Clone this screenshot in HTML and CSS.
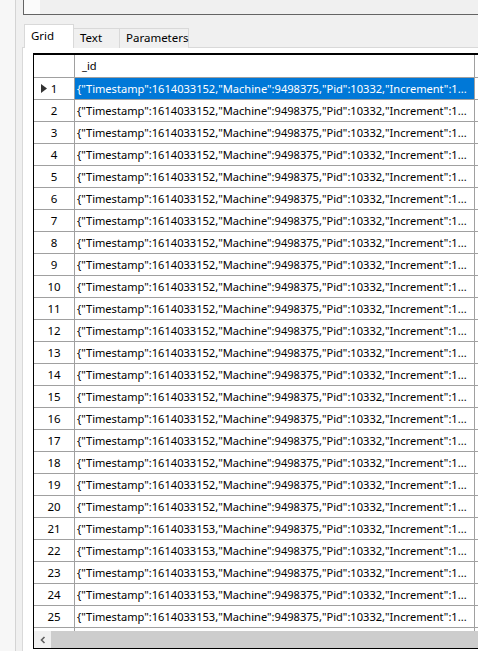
FILE: index.html
```html
<!DOCTYPE html>
<html lang="en">
<head>
  <meta charset="UTF-8">
  <title>Query Result</title>
  <link rel="stylesheet" href="styles.css">
</head>
<body>
  <div class="window">
    <div class="side"></div>
    <div class="main">
      <!-- editor area above the tabs -->
      <div class="top-box"><div class="top-white"></div></div>

      <!-- result tabs -->
      <div class="tabs">
        <div class="tab active">Grid</div>
        <div class="tab">Text</div>
        <div class="tab">Parameters</div>
      </div>

      <div class="tab-page">
        <div class="grid">
          <div class="grid-body">
            <div class="row head"><div class="num"></div><div class="cell">_id</div><div class="rest"></div></div>
            <div class="row selected"><div class="num"><svg class="arrow" width="6" height="9" viewBox="0 0 6 9"><path d="M0 0 L6 4.5 L0 9 Z" fill="#333"/></svg>1</div><div class="cell">{"Timestamp":1614033152,"Machine":9498375,"Pid":10332,"Increment":1...</div><div class="rest"></div></div>
            <div class="row"><div class="num">2</div><div class="cell">{"Timestamp":1614033152,"Machine":9498375,"Pid":10332,"Increment":1...</div><div class="rest"></div></div>
            <div class="row"><div class="num">3</div><div class="cell">{"Timestamp":1614033152,"Machine":9498375,"Pid":10332,"Increment":1...</div><div class="rest"></div></div>
            <div class="row"><div class="num">4</div><div class="cell">{"Timestamp":1614033152,"Machine":9498375,"Pid":10332,"Increment":1...</div><div class="rest"></div></div>
            <div class="row"><div class="num">5</div><div class="cell">{"Timestamp":1614033152,"Machine":9498375,"Pid":10332,"Increment":1...</div><div class="rest"></div></div>
            <div class="row"><div class="num">6</div><div class="cell">{"Timestamp":1614033152,"Machine":9498375,"Pid":10332,"Increment":1...</div><div class="rest"></div></div>
            <div class="row"><div class="num">7</div><div class="cell">{"Timestamp":1614033152,"Machine":9498375,"Pid":10332,"Increment":1...</div><div class="rest"></div></div>
            <div class="row"><div class="num">8</div><div class="cell">{"Timestamp":1614033152,"Machine":9498375,"Pid":10332,"Increment":1...</div><div class="rest"></div></div>
            <div class="row"><div class="num">9</div><div class="cell">{"Timestamp":1614033152,"Machine":9498375,"Pid":10332,"Increment":1...</div><div class="rest"></div></div>
            <div class="row"><div class="num">10</div><div class="cell">{"Timestamp":1614033152,"Machine":9498375,"Pid":10332,"Increment":1...</div><div class="rest"></div></div>
            <div class="row"><div class="num">11</div><div class="cell">{"Timestamp":1614033152,"Machine":9498375,"Pid":10332,"Increment":1...</div><div class="rest"></div></div>
            <div class="row"><div class="num">12</div><div class="cell">{"Timestamp":1614033152,"Machine":9498375,"Pid":10332,"Increment":1...</div><div class="rest"></div></div>
            <div class="row"><div class="num">13</div><div class="cell">{"Timestamp":1614033152,"Machine":9498375,"Pid":10332,"Increment":1...</div><div class="rest"></div></div>
            <div class="row"><div class="num">14</div><div class="cell">{"Timestamp":1614033152,"Machine":9498375,"Pid":10332,"Increment":1...</div><div class="rest"></div></div>
            <div class="row"><div class="num">15</div><div class="cell">{"Timestamp":1614033152,"Machine":9498375,"Pid":10332,"Increment":1...</div><div class="rest"></div></div>
            <div class="row"><div class="num">16</div><div class="cell">{"Timestamp":1614033152,"Machine":9498375,"Pid":10332,"Increment":1...</div><div class="rest"></div></div>
            <div class="row"><div class="num">17</div><div class="cell">{"Timestamp":1614033152,"Machine":9498375,"Pid":10332,"Increment":1...</div><div class="rest"></div></div>
            <div class="row"><div class="num">18</div><div class="cell">{"Timestamp":1614033152,"Machine":9498375,"Pid":10332,"Increment":1...</div><div class="rest"></div></div>
            <div class="row"><div class="num">19</div><div class="cell">{"Timestamp":1614033152,"Machine":9498375,"Pid":10332,"Increment":1...</div><div class="rest"></div></div>
            <div class="row"><div class="num">20</div><div class="cell">{"Timestamp":1614033152,"Machine":9498375,"Pid":10332,"Increment":1...</div><div class="rest"></div></div>
            <div class="row"><div class="num">21</div><div class="cell">{"Timestamp":1614033153,"Machine":9498375,"Pid":10332,"Increment":1...</div><div class="rest"></div></div>
            <div class="row"><div class="num">22</div><div class="cell">{"Timestamp":1614033153,"Machine":9498375,"Pid":10332,"Increment":1...</div><div class="rest"></div></div>
            <div class="row"><div class="num">23</div><div class="cell">{"Timestamp":1614033153,"Machine":9498375,"Pid":10332,"Increment":1...</div><div class="rest"></div></div>
            <div class="row"><div class="num">24</div><div class="cell">{"Timestamp":1614033153,"Machine":9498375,"Pid":10332,"Increment":1...</div><div class="rest"></div></div>
            <div class="row"><div class="num">25</div><div class="cell">{"Timestamp":1614033153,"Machine":9498375,"Pid":10332,"Increment":1...</div><div class="rest"></div></div>
            <div class="row"><div class="num"></div><div class="cell"></div><div class="rest"></div></div>
          </div>
          <!-- horizontal scrollbar -->
          <div class="hscroll">
            <div class="scroll-btn">
              <svg width="8" height="8" viewBox="0 0 8 8"><path d="M5.5 1 L2.5 4 L5.5 7" fill="none" stroke="#606060" stroke-width="1.6"/></svg>
            </div>
            <div class="scroll-thumb"></div>
          </div>
        </div>
      </div>
    </div>
  </div>
</body>
</html>
```

FILE: styles.css
```css
body {
  margin: 0;
  background-color: #f0f0f0;
  font-family: "Noto Sans", "Liberation Sans", sans-serif;
  font-size: 11.1px;
  color: #000;
  overflow: hidden;
}

.window {
  display: flex;
  height: 651px;
  width: 478px;
  overflow: hidden;
}

/* splitter strip on the left */
.side {
  width: 15px;
  flex-shrink: 0;
  background-color: #f7f7f7;
  border-right: 1px solid #d4d4d4;
}

.main {
  flex: 1;
  min-width: 0;
  padding-left: 6px;
}

.top-box {
  margin-left: 1px;
  height: 14px;
  border-left: 1px solid #646464;
  border-bottom: 1px solid #646464;
  background-color: #f0f0f0;
  display: flex;
}

.top-white {
  width: 16px;
  background-color: #fbfbfb;
}

/* tabs */
.tabs {
  display: flex;
  align-items: flex-end;
  margin-top: 10px;
  padding-left: 2px;
  height: 23px;
}

.tab {
  height: 19px;
  line-height: 18px;
  padding: 0 6px;
  background-color: #f0f0f0;
  border: 1px solid #d9d9d9;
  border-bottom: none;
  margin-left: -1px;
  font-size: 11.5px;
}

.tab:nth-child(2) { width: 33px; }
.tab:nth-child(3) { width: 56px; }

.tab.active {
  height: 23px;
  line-height: 21px;
  width: 36px;
  background-color: #fff;
  position: relative;
  z-index: 1;
  margin-left: 0;
}

.tab-page {
  background-color: #fff;
  border-top: 1px solid #d9d9d9;
  border-left: 1px solid #d9d9d9;
  margin-top: -1px;
  padding: 5px 0 0 10px;
  height: 700px;
}

/* data grid */
.grid {
  border-top: 2px solid #000;
  border-left: 1px solid #000;
  border-bottom: 1px solid #000;
  width: 600px;
}

.grid-body {
  height: 576px;
  overflow: hidden;
}

.row {
  display: flex;
  height: 21px;
  line-height: 21px;
  border-bottom: 1px solid #a0a0a0;
}

.row.head {
  height: 22px;
  line-height: 22px;
}

.num {
  width: 40px;
  flex-shrink: 0;
  border-right: 1px solid #a0a0a0;
  text-align: center;
  font-size: 11.5px;
  position: relative;
}

.arrow {
  position: absolute;
  left: 7px;
  top: 6px;
}

.cell {
  width: 397px;
  flex-shrink: 0;
  padding-left: 2px;
  border-right: 1px solid #a0a0a0;
  white-space: nowrap;
  overflow: hidden;
}

.head .cell {
  padding-left: 7px;
  width: 392px;
}

.selected .cell {
  background-color: #0078d7;
  color: #fff;
}

.rest {
  flex: 1;
}

.hscroll {
  display: flex;
  height: 17px;
  background-color: #f0f0f0;
}

.scroll-btn {
  width: 17px;
  display: flex;
  align-items: center;
  justify-content: center;
}

.scroll-thumb {
  flex: 1;
  background-color: #cdcdcd;
}
```
